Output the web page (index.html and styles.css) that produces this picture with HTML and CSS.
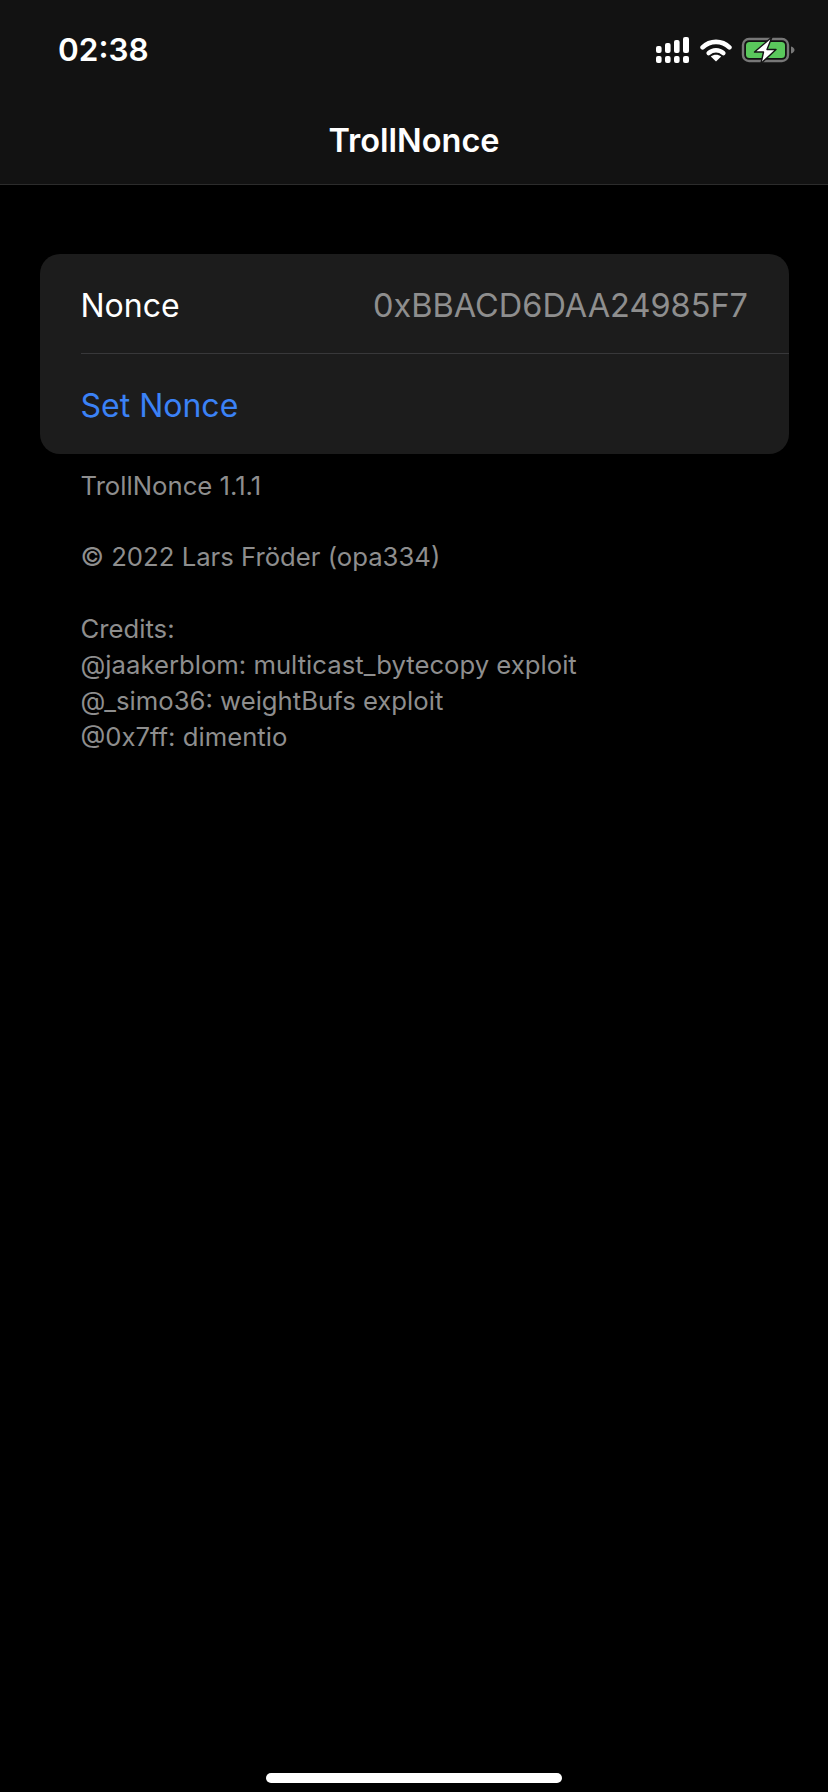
FILE: index.html
```html
<!DOCTYPE html>
<html lang="en">
<head>
  <meta charset="UTF-8" />
  <meta name="viewport" content="width=device-width, initial-scale=1.0"/>
  <title>TrollNonce</title>
  <link rel="stylesheet" href="styles.css">
</head>
<body>

  <header class="top-bar">
    <div class="status-bar">
      <span class="clock">02:38</span>
      <div class="status-icons">
        <svg class="icon-signal" width="34" height="27" viewBox="0 0 34 27">
          <rect x="0" y="9" width="5.6" height="7" rx="2" fill="#fff"/>
          <rect x="9" y="6" width="5.6" height="10" rx="2" fill="#fff"/>
          <rect x="18" y="3" width="5.6" height="13" rx="2" fill="#fff"/>
          <rect x="27" y="0" width="6" height="16" rx="2" fill="#fff"/>
          <rect x="0" y="19" width="5.6" height="7" rx="2" fill="#fff"/>
          <rect x="9" y="19" width="5.6" height="7" rx="2" fill="#fff"/>
          <rect x="18" y="19" width="5.6" height="7" rx="2" fill="#fff"/>
          <rect x="27" y="19" width="6" height="7" rx="2" fill="#fff"/>
        </svg>
        <svg class="icon-wifi" width="32" height="24" viewBox="0 0 32 24">
          <path d="M2.6 9.4C10 2 22 2 29.4 9.4" fill="none" stroke="#fff" stroke-width="4.6" stroke-linecap="round"/>
          <path d="M8.6 15.2C12.8 11.2 19.2 11.2 23.4 15.2" fill="none" stroke="#fff" stroke-width="4.4" stroke-linecap="round"/>
          <path d="M16 23.6L10.8 18.6C13.8 16.2 18.2 16.2 21.2 18.6Z" fill="#fff"/>
        </svg>
        <svg class="icon-battery" width="54" height="28" viewBox="0 0 54 28">
          <rect x="2" y="3" width="45" height="22" rx="6" fill="none" stroke="#777" stroke-width="2.4"/>
          <rect x="5" y="6" width="39" height="16" rx="3.5" fill="#5ac85c"/>
          <path d="M50 10.5C52.4 11.2 53.5 12.4 53.5 14C53.5 15.6 52.4 16.8 50 17.5Z" fill="#777"/>
          <path d="M31 1L13.5 16H22.5L20 27.5L35 13.5H26Z" fill="#fff" stroke="#141414" stroke-width="1.4" stroke-linejoin="round"/>
        </svg>
      </div>
    </div>
    <div class="nav-bar">
      <h1 class="nav-title">TrollNonce</h1>
    </div>
  </header>

  <main class="content">
    <section class="card">
      <div class="row row-first">
        <span class="row-label">Nonce</span>
        <span class="row-value">0xBBACD6DAA24985F7</span>
      </div>
      <div class="row row-second">
        <span class="row-action">Set Nonce</span>
      </div>
    </section>

    <footer class="footer-note">
      <p>TrollNonce 1.1.1</p>
      <p>© 2022 Lars Fröder (opa334)</p>
      <p>Credits:<br>@jaakerblom: multicast_bytecopy exploit<br>@_simo36: weightBufs exploit<br>@0x7ff: dimentio</p>
    </footer>
  </main>

  <div class="home-indicator"></div>

</body>
</html>
```

FILE: styles.css
```css
* {
  box-sizing: border-box;
}

html, body {
  height: 100%;
}

body {
  margin: 0;
  display: flex;
  flex-direction: column;
  background-color: #000;
  color: #fff;
  font-family: 'Inter', 'Liberation Sans', sans-serif;
}

.top-bar {
  height: 185px;
  background-color: #121212;
  border-bottom: 1px solid #2c2c2c;
}

.status-bar {
  height: 88px;
  display: flex;
  justify-content: space-between;
  align-items: center;
  padding: 12px 33px 0 58px;
}

.clock {
  font-size: 31.5px;
  font-weight: 600;
  line-height: 40px;
}

.status-icons {
  display: flex;
  align-items: center;
  gap: 10px;
}

.status-icons svg {
  display: block;
}

.icon-battery {
  margin-left: -1px;
}

.nav-bar {
  height: 96px;
  display: flex;
  justify-content: center;
  align-items: center;
  padding-top: 9px;
}

.nav-title {
  margin: 0;
  font-size: 32.5px;
  font-weight: 600;
  line-height: 40px;
}

.content {
  flex: 1;
  padding: 69px 39px 0 40px;
}

.card {
  background-color: #1c1c1c;
  border-radius: 20px;
  padding-left: 40.5px;
}

.row {
  display: flex;
  justify-content: space-between;
  align-items: center;
  padding-right: 41px;
  font-size: 32px;
}

.row-first {
  height: 99px;
  padding-top: 3px;
}

.row-second {
  height: 101px;
  padding-top: 2px;
  border-top: 1px solid #38383a;
}

.row-value {
  font-size: 32.5px;
  color: #8e8e8e;
}

.row-action {
  color: #3b82f6;
}

.footer-note {
  padding: 13.5px 41px 0 40.5px;
  font-size: 25.7px;
  line-height: 35.9px;
  color: #8e8e8e;
}

.footer-note p {
  margin: 0 0 35.9px;
}

.home-indicator {
  width: 296px;
  height: 10px;
  margin: 0 auto 9px;
  background-color: #fff;
  border-radius: 5px;
}
```
